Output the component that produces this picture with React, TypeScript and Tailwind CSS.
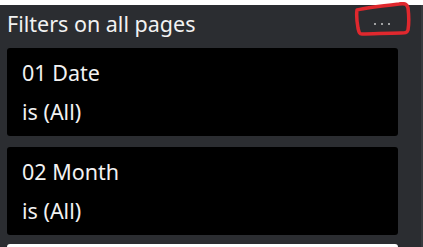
import React from 'react';

interface Filter {
  id: string;
  name: string;
  value: string;
}

const filters: Filter[] = [
  { id: 'date', name: '01 Date', value: 'is (All)' },
  { id: 'month', name: '02 Month', value: 'is (All)' },
];

const FilterCard: React.FC<{ filter: Filter }> = ({ filter }) => (
  <div className="shrink-0 bg-black rounded-[3px] pl-[15px] pt-[5px] h-[88px] text-[#f2f2f2] text-[21.5px] leading-[39px]">
    <div>{filter.name}</div>
    <div>{filter.value}</div>
  </div>
);

export default function App() {
  return (
    <div className="w-[423px] h-[247px] bg-white pt-[5px] overflow-hidden" style={{ fontFamily: '"Noto Sans", sans-serif' }}>
      <div className="flex h-[242px] bg-[#2b2d31]">
        <div className="flex-1 flex flex-col pl-[7px] pr-[23px]">
          <div className="relative shrink-0 flex items-center justify-between h-[43px]">
            <span className="text-[21.5px] text-[#f2f2f2] -mt-[4px]">Filters on all pages</span>
            <div className="flex gap-[5px] mr-[8px] -mt-[5px]">
              <span className="w-[2px] h-[2px] rounded-full bg-[#c8c8c8]" />
              <span className="w-[2px] h-[2px] rounded-full bg-[#c8c8c8]" />
              <span className="w-[2px] h-[2px] rounded-full bg-[#c8c8c8]" />
            </div>
            <svg className="absolute left-[340px] -top-[3px]" width="66" height="36" viewBox="0 0 66 36" fill="none">
              <path
                d="M10 8 C18 6 34 4 52 2 C58 1 60 2 61 6 C62 14 62 22 61 28 C60 31 58 31 54 31 C40 31 26 32 15 32 C12 32 12 30 11 26 C10 20 9 14 10 8 Z"
                stroke="#e0282e"
                strokeWidth="3.5"
                strokeLinejoin="round"
              />
            </svg>
          </div>
          <div className="flex flex-col gap-[11px]">
            {filters.map((f) => (
              <FilterCard key={f.id} filter={f} />
            ))}
            <div className="shrink-0 bg-white rounded-[3px] h-[20px] -mt-[2px]" />
          </div>
        </div>
        <div className="w-[2px] bg-[#383a3e]" />
      </div>
    </div>
  );
}
